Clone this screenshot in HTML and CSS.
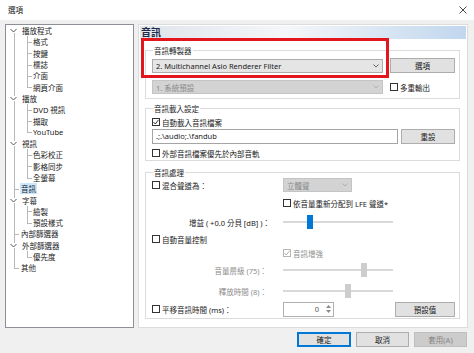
FILE: index.html
```html
<!DOCTYPE html>
<html lang="zh-Hant">
<head>
    <meta charset="UTF-8">
    <meta name="viewport" content="width=device-width, initial-scale=1.0">
    <title>選項</title>
    <link rel="stylesheet" href="styles.css">
</head>
<body>
<div class="window">
    <div class="titlebar">
        <span class="title">選項</span>
        <svg class="close" width="8" height="8" viewBox="0 0 8 8"><path d="M0.5 0.5L7.5 7.5M7.5 0.5L0.5 7.5" stroke="#333" stroke-width="0.9"/></svg>
    </div>

    <div class="main">
        <div class="tree">
            <ul class="root">
                <li>
                    <div class="node parent"><svg class="chev" width="7" height="5" viewBox="0 0 7 5"><path d="M0.5 1L3.5 4L6.5 1" fill="none" stroke="#555" stroke-width="1"/></svg><span>播放程式</span></div>
                    <ul class="kids">
                        <li><div class="node">格式</div></li>
                        <li><div class="node">按鍵</div></li>
                        <li><div class="node">標誌</div></li>
                        <li><div class="node">介面</div></li>
                        <li><div class="node">網頁介面</div></li>
                    </ul>
                </li>
                <li>
                    <div class="node parent"><svg class="chev" width="7" height="5" viewBox="0 0 7 5"><path d="M0.5 1L3.5 4L6.5 1" fill="none" stroke="#555" stroke-width="1"/></svg><span>播放</span></div>
                    <ul class="kids">
                        <li><div class="node">DVD 視訊</div></li>
                        <li><div class="node">擷取</div></li>
                        <li><div class="node">YouTube</div></li>
                    </ul>
                </li>
                <li>
                    <div class="node parent"><svg class="chev" width="7" height="5" viewBox="0 0 7 5"><path d="M0.5 1L3.5 4L6.5 1" fill="none" stroke="#555" stroke-width="1"/></svg><span>視訊</span></div>
                    <ul class="kids">
                        <li><div class="node">色彩校正</div></li>
                        <li><div class="node">影格同步</div></li>
                        <li><div class="node">全螢幕</div></li>
                    </ul>
                </li>
                <li><div class="node leaf"><span class="selected">音訊</span></div></li>
                <li>
                    <div class="node parent"><svg class="chev" width="7" height="5" viewBox="0 0 7 5"><path d="M0.5 1L3.5 4L6.5 1" fill="none" stroke="#555" stroke-width="1"/></svg><span>字幕</span></div>
                    <ul class="kids">
                        <li><div class="node">繪製</div></li>
                        <li><div class="node">預設樣式</div></li>
                    </ul>
                </li>
                <li><div class="node leaf">內部篩選器</div></li>
                <li>
                    <div class="node parent"><svg class="chev" width="7" height="5" viewBox="0 0 7 5"><path d="M0.5 1L3.5 4L6.5 1" fill="none" stroke="#555" stroke-width="1"/></svg><span>外部篩選器</span></div>
                    <ul class="kids">
                        <li><div class="node">優先度</div></li>
                    </ul>
                </li>
                <li><div class="node leaf">其他</div></li>
            </ul>
        </div>

        <div class="page">
            <div class="page-title">音訊</div>

            <div class="group g-renderer">
                <span class="legend">音訊轉製器</span>
                <div class="row row-first">
                    <div class="combo"><span>2. Multichannel Asio Renderer Filter</span><svg width="6" height="4" viewBox="0 0 6 4"><path d="M0.5 0.5L3 3L5.5 0.5" fill="none" stroke="#555" stroke-width="0.9"/></svg></div>
                    <button class="btn btn-opt">選項</button>
                </div>
                <div class="row row-second">
                    <div class="combo disabled"><span>1. 系統預設</span><svg width="6" height="4" viewBox="0 0 6 4"><path d="M0.5 0.5L3 3L5.5 0.5" fill="none" stroke="#aaa" stroke-width="0.9"/></svg></div>
                    <label class="cb cb-multi"><span class="box"></span>多重輸出</label>
                </div>
            </div>

            <div class="group g-load">
                <span class="legend">音訊載入設定</span>
                <label class="cb cb-row1"><span class="box"><svg width="6" height="6" viewBox="0 0 6 6"><path d="M0.5 3L2.3 5L5.5 0.8" fill="none" stroke="#222" stroke-width="0.9"/></svg></span>自動載入音訊檔案</label>
                <div class="row row-input">
                    <div class="textbox">.;.\audio;.\fandub</div>
                    <button class="btn btn-reset">重設</button>
                </div>
                <label class="cb cb-row2"><span class="box"></span>外部音訊檔案優先於內部音軌</label>
            </div>

            <div class="group g-process">
                <span class="legend">音訊處理</span>
                <div class="grid">
                    <label class="cb"><span class="box"></span>混合聲道為：</label>
                    <div class="cell"><div class="combo disabled combo-small"><span>立體聲</span><svg width="6" height="4" viewBox="0 0 6 4"><path d="M0.5 0.5L3 3L5.5 0.5" fill="none" stroke="#aaa" stroke-width="0.9"/></svg></div></div>

                    <div></div>
                    <label class="cb"><span class="box"></span>依音量重新分配到 LFE 聲道*</label>

                    <div class="lbl">增益 ( +0.0 分貝 [dB] )：</div>
                    <div class="cell"><div class="slider"><span class="thumb" style="margin-left: 24px"></span></div></div>

                    <label class="cb"><span class="box"></span>自動音量控制</label>
                    <div></div>

                    <div></div>
                    <label class="cb disabled"><span class="box"><svg width="6" height="6" viewBox="0 0 6 6"><path d="M0.5 3L2.3 5L5.5 0.8" fill="none" stroke="#a8a8a8" stroke-width="0.9"/></svg></span>音訊增強</label>

                    <div class="lbl disabled lbl-deep">音量層級 (75)：</div>
                    <div class="cell"><div class="slider"><span class="thumb off" style="margin-left: 78px"></span></div></div>

                    <div class="lbl disabled lbl-deep">釋放時間 (8)：</div>
                    <div class="cell"><div class="slider"><span class="thumb off" style="margin-left: 62px"></span></div></div>

                    <label class="cb"><span class="box"></span>平移音訊時間 (ms)：</label>
                    <div class="cell cell-spin">
                        <div class="spin">
                            <span class="spin-val">0</span>
                            <span class="spin-arrows">
                                <svg width="5" height="3" viewBox="0 0 5 3"><path d="M0 3L2.5 0L5 3Z" fill="#888"/></svg>
                                <svg width="5" height="3" viewBox="0 0 5 3"><path d="M0 0L2.5 3L5 0Z" fill="#888"/></svg>
                            </span>
                        </div>
                        <button class="btn btn-default">預設值</button>
                    </div>
                </div>
            </div>

            <div class="mark"></div>
        </div>
    </div>

    <div class="footer">
        <button class="btn btn-ok">確定</button>
        <button class="btn btn-cancel">取消</button>
        <button class="btn btn-apply" disabled>套用(A)</button>
    </div>
</div>
</body>
</html>
```

FILE: styles.css
```css
* {
    box-sizing: border-box;
}
body {
    margin: 0;
    width: 474px;
    height: 353px;
    overflow: hidden;
    font-family: "Noto Sans", "Noto Sans CJK TC", sans-serif;
    font-size: 7.5px;
    color: #1a1a1a;
    background: #f0f0f0;
}
.window {
    width: 474px;
    height: 353px;
}

/* title bar */
.titlebar {
    height: 20px;
    background: #fff;
    display: flex;
    align-items: center;
    justify-content: space-between;
    padding: 0 7px 0 8px;
}
.title {
    line-height: 10px;
}

/* main area */
.main {
    display: flex;
    gap: 4px;
    height: 308px;
    padding: 4px 6px 0 5px;
}

/* tree */
.tree {
    width: 129px;
    background: #fff;
    border: 1px solid #8c8f96;
}
.tree ul {
    list-style: none;
    margin: 0;
    padding: 0;
}
.root {
    position: relative;
    padding-top: 2px;
}
.root::before {
    content: "";
    position: absolute;
    left: 8px;
    top: 8px;
    bottom: 5.6px;
    border-left: 1px solid #b8b8b8;
}
.node {
    position: relative;
    display: flex;
    align-items: center;
    height: 11.3px;
    white-space: nowrap;
}
.parent {
    padding-left: 4px;
}
.chev {
    position: relative;
    margin-right: 5px;
    background: #fff;
    flex: none;
}
.leaf {
    padding-left: 15px;
}
.leaf::before {
    content: "";
    position: absolute;
    left: 8px;
    width: 5px;
    top: 50%;
    border-top: 1px solid #b8b8b8;
}
.selected {
    background: #cce8ff;
    padding: 0 1px;
    margin-left: -1px;
}
.kids {
    position: relative;
}
.kids::before {
    content: "";
    position: absolute;
    left: 21px;
    top: 0;
    bottom: 5.6px;
    border-left: 1px solid #b8b8b8;
}
.kids .node {
    padding-left: 27px;
}
.kids .node::before {
    content: "";
    position: absolute;
    left: 21px;
    width: 5px;
    top: 50%;
    border-top: 1px solid #b8b8b8;
}

/* right page */
.page {
    position: relative;
    width: 330px;
    height: 304px;
    background: #fff;
    border: 1px solid #dcdcdc;
    padding: 1px;
}
.page-title {
    height: 13px;
    line-height: 13px;
    padding-left: 1px;
    font-size: 10px;
    font-weight: bold;
    color: #1c2a48;
    background: linear-gradient(to right, #e0e5eb 0%, #f4f6f9 45%, #c1d7ee 100%);
}
.group {
    margin: 0 6px 0 5px;
    border: 1px solid #dcdcdc;
    padding: 0 4px 0 6px;
}
.legend {
    display: block;
    width: max-content;
    height: 10px;
    line-height: 10px;
    margin: -5px 0 0 1px;
    padding: 0 1px;
    background: #fff;
}
.g-renderer {
    margin-top: 11px;
    padding-bottom: 4px;
}
.g-load {
    margin-top: 9px;
    padding-bottom: 2px;
}
.g-process {
    margin-top: 11px;
    height: 147px;
}
.row {
    display: flex;
    align-items: center;
}
.row-first {
    height: 15px;
    margin-top: 2px;
    gap: 7px;
}
.row-second {
    height: 14px;
    margin-top: 7px;
}

/* controls */
.combo {
    display: flex;
    align-items: center;
    justify-content: space-between;
    height: 14px;
    border: 1px solid #adadad;
    background: #e5e5e5;
    padding: 0 3px 0 3px;
    white-space: nowrap;
}
.row .combo {
    width: 231px;
}
.combo.disabled {
    background: #d3d3d3;
    border-color: #c4c4c4;
    color: #8a8a8a;
}
.combo-small {
    width: 69px;
}
.btn {
    font: inherit;
    color: #1a1a1a;
    height: 15px;
    padding: 0;
    background: #e1e1e1;
    border: 1px solid #adadad;
}
.btn-opt {
    width: 65px;
}
.cb {
    display: flex;
    align-items: center;
    gap: 2px;
    height: 10px;
    white-space: nowrap;
}
.box {
    display: flex;
    align-items: center;
    justify-content: center;
    width: 8px;
    height: 8px;
    border: 1px solid #333;
    background: #fff;
    flex: none;
}
.cb.disabled {
    color: #8d8d8d;
}
.cb.disabled .box {
    border-color: #b5b5b5;
}
.cb-multi {
    margin-left: 7px;
}
.cb-row1 {
    margin-top: 3px;
}
.row-input {
    height: 15px;
    margin-top: 2px;
    gap: 3px;
}
.textbox {
    flex: 1;
    height: 15px;
    line-height: 13px;
    border: 1px solid #a5a5a5;
    padding-left: 3px;
    background: #fff;
}
.btn-reset {
    width: 54px;
}
.cb-row2 {
    margin-top: 4px;
}

/* processing grid */
.grid {
    display: grid;
    grid-template-columns: 126px 1fr;
    grid-template-rows: 14px 22px 16px 18px 10px 24px 18px 18px;
    column-gap: 5px;
    align-items: center;
}
.cell {
    display: flex;
    align-items: center;
}
.lbl {
    text-align: right;
    padding-right: 8px;
    white-space: nowrap;
}
.lbl.disabled {
    color: #8d8d8d;
}
.lbl-deep {
    padding-right: 11px;
}
.slider {
    width: 110px;
    height: 14px;
    display: flex;
    background: linear-gradient(#d9d9d9, #d9d9d9) center / 100% 2px no-repeat;
}
.thumb {
    width: 6px;
    height: 14px;
    background: #0078d7;
}
.thumb.off {
    background: #cdcdcd;
}
.cell-spin {
    justify-content: space-between;
}
.spin {
    display: flex;
    width: 51px;
    height: 15px;
    border: 1px solid #b0b0b0;
    background: #fff;
}
.spin-val {
    flex: 1;
    text-align: right;
    line-height: 13px;
    padding-right: 5px;
    color: #555;
}
.spin-arrows {
    width: 9px;
    display: flex;
    flex-direction: column;
    align-items: center;
    justify-content: center;
    gap: 2px;
}
.btn-default {
    width: 60px;
}

/* annotation frame */
.mark {
    position: absolute;
    left: 2px;
    top: 13px;
    width: 248px;
    height: 40px;
    border: 3px solid #e3151d;
}

/* footer buttons */
.footer {
    display: flex;
    justify-content: flex-end;
    gap: 5px;
    padding: 4px 7px 0 0;
}
.btn-ok {
    width: 54px;
    border-color: #0078d7;
    box-shadow: inset 0 0 0 1px #0078d7;
}
.btn-cancel {
    width: 53px;
}
.btn-apply {
    width: 53px;
    background: #cccccc;
    border-color: #bfbfbf;
    color: #858585;
}
```
